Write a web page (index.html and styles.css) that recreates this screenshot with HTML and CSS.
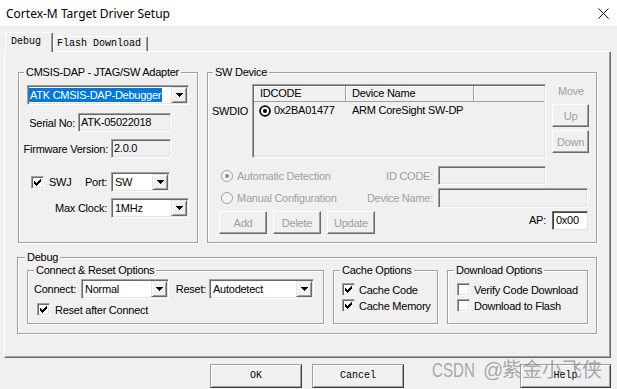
FILE: index.html
```html
<!DOCTYPE html>
<html lang="en">
<head>
    <meta charset="UTF-8">
    <title>Cortex-M Target Driver Setup</title>
    <link rel="stylesheet" href="styles.css">
</head>
<body>
<div class="window">

    <div class="titlebar">
        <span class="title">Cortex-M Target Driver Setup</span>
        <svg class="close" width="11" height="11" viewBox="0 0 11 11"><path d="M0.5 0.5L10.5 10.5M10.5 0.5L0.5 10.5" stroke="#111" stroke-width="1"/></svg>
    </div>

    <div class="client">
        <div class="tabs">
            <div class="tab active">Debug</div>
            <div class="tab">Flash Download</div>
        </div>

        <div class="tab-page">
            <div class="top-row">

                <!-- adapter -->
                <fieldset class="group adapter">
                    <legend>CMSIS-DAP - JTAG/SW Adapter</legend>
                    <div class="combo adapter-combo">
                        <span class="combo-text"><span class="selected">ATK CMSIS-DAP-Debugger</span></span>
                        <span class="combo-btn"><svg width="7" height="4" viewBox="0 0 7 4"><path d="M0 0h7v1H0zM1 1h5v1H1zM2 2h3v1H2zM3 3h1v1H3z"/></svg></span>
                    </div>
                    <div class="field-row serial-row">
                        <span>Serial No:</span>
                        <span class="edit readonly serial-edit">ATK-05022018</span>
                    </div>
                    <div class="field-row fw-row">
                        <span>Firmware Version:</span>
                        <span class="edit readonly fw-edit">2.0.0</span>
                    </div>
                    <div class="field-row swj-row">
                        <span class="check">
                            <span class="box"><svg width="7" height="7" viewBox="0 0 7 7"><path d="M0 2h1v3H0zM1 3h1v3H1zM2 4h1v3H2zM3 3h1v3H3zM4 2h1v3H4zM5 1h1v3H5zM6 0h1v3H6z"/></svg></span>
                            SWJ
                        </span>
                        <span class="port-label">Port:</span>
                        <div class="combo port-combo">
                            <span class="combo-text">SW</span>
                            <span class="combo-btn"><svg width="7" height="4" viewBox="0 0 7 4"><path d="M0 0h7v1H0zM1 1h5v1H1zM2 2h3v1H2zM3 3h1v1H3z"/></svg></span>
                        </div>
                    </div>
                    <div class="field-row clock-row">
                        <span>Max Clock:</span>
                        <div class="combo clock-combo">
                            <span class="combo-text">1MHz</span>
                            <span class="combo-btn"><svg width="7" height="4" viewBox="0 0 7 4"><path d="M0 0h7v1H0zM1 1h5v1H1zM2 2h3v1H2zM3 3h1v1H3z"/></svg></span>
                        </div>
                    </div>
                </fieldset>

                <!-- sw device -->
                <fieldset class="group sw-device">
                    <legend>SW Device</legend>
                    <div class="sw-top">
                        <span class="swdio">SWDIO</span>
                        <div class="listbox">
                            <div class="list-head">
                                <span class="col-id">IDCODE</span>
                                <span class="col-name">Device Name</span>
                                <span class="col-rest"></span>
                            </div>
                            <div class="list-row">
                                <span class="col-id">
                                    <svg width="12" height="12" viewBox="0 0 12 12"><circle cx="6" cy="6" r="4.9" fill="#fff" stroke="#000" stroke-width="1.8"/><circle cx="6" cy="6" r="2" fill="#000"/></svg>
                                    0x2BA01477
                                </span>
                                <span class="col-name">ARM CoreSight SW-DP</span>
                            </div>
                        </div>
                        <div class="move-col">
                            <span class="move-label">Move</span>
                            <span class="btn disabled up-btn">Up</span>
                            <span class="btn disabled down-btn">Down</span>
                        </div>
                    </div>

                    <div class="sw-row row-auto">
                        <span class="radio disabled">
                            <svg width="12" height="12" viewBox="0 0 12 12"><circle cx="6" cy="6" r="5.5" fill="#f4f4f4" stroke="#a0a0a0"/><circle cx="6" cy="6" r="2" fill="#8c8c8c"/></svg>
                            Automatic Detection
                        </span>
                        <span class="field-label disabled">ID CODE:</span>
                        <span class="edit readonly idcode-edit"></span>
                    </div>
                    <div class="sw-row row-manual">
                        <span class="radio disabled">
                            <svg width="12" height="12" viewBox="0 0 12 12"><circle cx="6" cy="6" r="5.5" fill="#f4f4f4" stroke="#a0a0a0"/></svg>
                            Manual Configuration
                        </span>
                        <span class="field-label disabled">Device Name:</span>
                        <span class="edit readonly devname-edit"></span>
                    </div>
                    <div class="sw-row row-actions">
                        <span class="btn disabled act-btn">Add</span>
                        <span class="btn disabled act-btn">Delete</span>
                        <span class="btn disabled act-btn">Update</span>
                        <span class="ap-label">AP:</span>
                        <span class="edit ap-edit">0x00</span>
                    </div>
                </fieldset>
            </div>

            <!-- debug -->
            <fieldset class="group debug">
                <legend>Debug</legend>
                <div class="debug-row">
                    <fieldset class="group connect">
                        <legend>Connect &amp; Reset Options</legend>
                        <div class="connect-row">
                            <span class="lbl-connect">Connect:</span>
                            <div class="combo connect-combo">
                                <span class="combo-text">Normal</span>
                                <span class="combo-btn"><svg width="7" height="4" viewBox="0 0 7 4"><path d="M0 0h7v1H0zM1 1h5v1H1zM2 2h3v1H2zM3 3h1v1H3z"/></svg></span>
                            </div>
                            <span class="lbl-reset">Reset:</span>
                            <div class="combo reset-combo">
                                <span class="combo-text">Autodetect</span>
                                <span class="combo-btn"><svg width="7" height="4" viewBox="0 0 7 4"><path d="M0 0h7v1H0zM1 1h5v1H1zM2 2h3v1H2zM3 3h1v1H3z"/></svg></span>
                            </div>
                        </div>
                        <div class="check reset-after">
                            <span class="box"><svg width="7" height="7" viewBox="0 0 7 7"><path d="M0 2h1v3H0zM1 3h1v3H1zM2 4h1v3H2zM3 3h1v3H3zM4 2h1v3H4zM5 1h1v3H5zM6 0h1v3H6z"/></svg></span>
                            Reset after Connect
                        </div>
                    </fieldset>

                    <fieldset class="group cache">
                        <legend>Cache Options</legend>
                        <div class="check opt-first">
                            <span class="box"><svg width="7" height="7" viewBox="0 0 7 7"><path d="M0 2h1v3H0zM1 3h1v3H1zM2 4h1v3H2zM3 3h1v3H3zM4 2h1v3H4zM5 1h1v3H5zM6 0h1v3H6z"/></svg></span>
                            Cache Code
                        </div>
                        <div class="check opt-next">
                            <span class="box"><svg width="7" height="7" viewBox="0 0 7 7"><path d="M0 2h1v3H0zM1 3h1v3H1zM2 4h1v3H2zM3 3h1v3H3zM4 2h1v3H4zM5 1h1v3H5zM6 0h1v3H6z"/></svg></span>
                            Cache Memory
                        </div>
                    </fieldset>

                    <fieldset class="group download">
                        <legend>Download Options</legend>
                        <div class="check opt-first">
                            <span class="box"></span>
                            Verify Code Download
                        </div>
                        <div class="check opt-next">
                            <span class="box"></span>
                            Download to Flash
                        </div>
                    </fieldset>
                </div>
            </fieldset>
        </div>

        <div class="buttons">
            <span class="btn push ok-btn">OK</span>
            <span class="btn push cancel-btn">Cancel</span>
            <span class="btn push help-btn">Help</span>
        </div>
    </div>

    <div class="watermark"><span class="wm-csdn">CSDN</span><span class="wm-at">@</span><span class="wm-name">紫金小飞侠</span></div>
</div>
</body>
</html>
```

FILE: styles.css
```css
* {
    box-sizing: border-box;
}

body {
    margin: 0;
    width: 617px;
    height: 389px;
    overflow: hidden;
    background: #f0f0f0;
    font-family: "Liberation Sans", Arial, sans-serif;
    font-size: 11px;
    letter-spacing: -0.25px;
    color: #000;
}

.window {
    position: relative;
    height: 389px;
}

/* title bar */
.titlebar {
    height: 26px;
    background: #fff;
    display: flex;
    align-items: center;
    justify-content: space-between;
    padding: 0 8px 0 6px;
    letter-spacing: 0;
}

.title {
    font-family: "Noto Sans", "Liberation Sans", sans-serif;
    font-size: 12px;
}

.close {
    display: block;
}

/* tabs */
.client {
    width: 611px;
    padding-left: 4px;
}

.tabs {
    display: flex;
    align-items: flex-end;
    height: 25px;
    padding-left: 1px;
}

.tab {
    font-family: "Liberation Mono", monospace;
    font-size: 10px;
    line-height: 12px;
    letter-spacing: 0;
    background: #f0f0f0;
    border: 1px solid;
    border-bottom: none;
    border-color: #fff #696969 #f0f0f0 #fff;
    box-shadow: inset -1px 0 #a0a0a0;
    border-radius: 2px 2px 0 0;
    width: 95px;
    height: 15px;
    padding: 1px 0 0 3px;
}

.tab.active {
    width: 48px;
    height: 20px;
    margin-bottom: -1px;
    padding: 3px 0 0 5px;
    position: relative;
    z-index: 1;
}

.tab-page {
    width: 607px;
    height: 307px;
    border: 1px solid;
    border-color: #fff #696969 #696969 #fff;
    box-shadow: inset -1px -1px #a0a0a0;
    padding: 13px 0 0 12px;
}

/* group boxes */
.group {
    margin: 0;
    padding: 0;
    min-width: 0;
    border: 1px solid #a0a0a0;
    box-shadow: inset 1px 1px #fff, 1px 1px #fff;
}

.group legend {
    margin-left: 6px;
    padding: 0 2px;
    line-height: 14px;
    background: #f0f0f0;
}

.top-row {
    display: flex;
    gap: 9px;
    margin-left: 1px;
    height: 178px;
}

.top-row > .group > legend {
    margin-left: 5px;
}

.adapter {
    width: 180px;
}

.sw-device {
    width: 390px;
}

/* controls */
.edit {
    display: block;
    height: 19px;
    border: 1px solid;
    border-color: #a0a0a0 #fff #fff #a0a0a0;
    box-shadow: inset 1px 1px #696969, inset -1px -1px #e3e3e3;
    background: #fff;
    padding: 0 2px;
    line-height: 17px;
}

.edit.readonly {
    background: #f0f0f0;
}

.combo {
    display: flex;
    height: 20px;
    padding: 1px;
    background: #fff;
    border: 1px solid;
    border-color: #a0a0a0 #fff #fff #a0a0a0;
    box-shadow: inset 1px 1px #696969, inset -1px -1px #e3e3e3;
}

.combo-text {
    flex: 1;
    padding-left: 2px;
    line-height: 16px;
    white-space: nowrap;
    overflow: hidden;
}

.combo-btn {
    width: 16px;
    display: flex;
    align-items: center;
    justify-content: center;
    background: #f0f0f0;
    border: 1px solid;
    border-color: #e3e3e3 #696969 #696969 #e3e3e3;
    box-shadow: inset 1px 1px #fff, inset -1px -1px #a0a0a0;
}

.combo-btn svg {
    display: block;
}

.selected {
    display: inline-block;
    background: #0078d7;
    color: #fff;
    line-height: 14px;
    margin: 1px 0 0 -2px;
    padding: 0 1px;
}

.check {
    display: flex;
    align-items: center;
    gap: 5px;
    height: 15px;
}

.box {
    width: 13px;
    height: 13px;
    flex: none;
    display: flex;
    align-items: center;
    justify-content: center;
    background: #fff;
    border: 1px solid;
    border-color: #a0a0a0 #fff #fff #a0a0a0;
    box-shadow: inset 1px 1px #696969, inset -1px -1px #e3e3e3;
}

.box svg {
    display: block;
}

.btn {
    display: flex;
    align-items: center;
    justify-content: center;
    background: #f0f0f0;
    border: 1px solid;
    border-color: #fff #696969 #696969 #fff;
    box-shadow: inset -1px -1px #a0a0a0;
}

.disabled {
    color: #a0a0a0;
}

/* adapter group */
.adapter-combo {
    width: 162px;
    margin: 6px 0 0 8px;
}

.field-row {
    display: flex;
    align-items: center;
    justify-content: flex-end;
    gap: 3px;
}

.serial-row {
    margin-top: 8px;
    padding-right: 26px;
}

.serial-edit {
    width: 93px;
}

.fw-row {
    margin-top: 7px;
    padding-right: 26px;
}

.fw-edit {
    width: 60px;
}

.swj-row {
    margin-top: 14px;
    padding: 0 27px 0 12px;
    justify-content: flex-start;
}

.port-label {
    margin-left: auto;
    margin-right: 1px;
}

.port-combo {
    width: 59px;
}

.clock-row {
    margin-top: 6px;
    padding-right: 8px;
    gap: 4px;
}

.clock-combo {
    width: 78px;
}

/* sw device group */
.sw-top {
    display: flex;
    margin-top: 5px;
}

.swdio {
    width: 44px;
    padding: 20px 0 0 4px;
    line-height: 14px;
}

.listbox {
    width: 294px;
    height: 74px;
    background: #f0f0f0;
    border: 1px solid;
    border-color: #a0a0a0 #fff #fff #a0a0a0;
    box-shadow: inset 1px 1px #696969, inset -1px -1px #e3e3e3;
    padding: 1px;
}

.list-head {
    display: flex;
    height: 16px;
}

.list-head span {
    line-height: 15px;
    border-right: 1px solid #a0a0a0;
    border-bottom: 1px solid #a0a0a0;
    box-shadow: inset 1px 1px #fff;
}

.list-row {
    display: flex;
    line-height: 17px;
}

.col-id {
    width: 92px;
    padding-left: 5px;
    display: flex;
    align-items: center;
    gap: 3px;
}

.list-head .col-id {
    padding-left: 6px;
}

.col-name {
    width: 128px;
    padding-left: 6px;
}

.col-rest {
    flex: 1;
}

.list-head .col-rest {
    border-right: none;
}

.move-col {
    width: 37px;
    margin-left: 6px;
    display: flex;
    flex-direction: column;
    color: #a0a0a0;
}

.move-label {
    line-height: 14px;
    text-align: center;
    padding-left: 1px;
}

.up-btn,
.down-btn {
    height: 23px;
}

.up-btn {
    margin-top: 6px;
}

.down-btn {
    margin-top: 3px;
}

.sw-row {
    display: flex;
    align-items: center;
    padding-right: 8px;
}

.radio {
    flex: 1;
    display: flex;
    align-items: center;
    gap: 4px;
    padding-left: 13px;
}

.radio svg {
    display: block;
}

.field-label {
    margin-right: 5px;
}

.row-auto {
    margin-top: 8px;
    height: 19px;
}

.idcode-edit {
    width: 108px;
    margin-right: 42px;
}

.row-manual {
    margin-top: 3px;
    height: 20px;
}

.devname-edit {
    width: 150px;
    height: 20px;
}

.row-actions {
    margin-top: 3px;
    height: 23px;
    align-items: flex-start;
    padding-left: 11px;
    gap: 6px;
}

.act-btn {
    width: 48px;
    height: 23px;
}

.ap-label {
    margin-left: auto;
    line-height: 19px;
}

.ap-edit {
    width: 36px;
    border-color: #696969 #e3e3e3 #e3e3e3 #696969;
    box-shadow: inset 1px 1px #404040;
    padding-left: 3px;
}

/* debug group */
.debug {
    width: 580px;
    height: 84px;
    margin-top: 7px;
}

.debug > legend {
    margin-left: 7px;
}

.debug-row {
    display: flex;
    gap: 9px;
    margin: -1px 0 0 9px;
}

.debug-row .group {
    height: 61px;
}

.connect {
    width: 297px;
}

.cache {
    width: 105px;
}

.download {
    width: 141px;
}

.connect-row {
    display: flex;
    align-items: center;
    margin-top: 2px;
    padding-left: 6px;
}

.lbl-connect {
    width: 47px;
}

.connect-combo {
    width: 88px;
}

.lbl-reset {
    width: 40px;
    text-align: right;
    padding-right: 3px;
}

.reset-combo {
    width: 105px;
}

.reset-after {
    margin: 3px 0 0 9px;
}

.cache .check {
    padding-left: 8px;
    gap: 4px;
}

.download .check {
    padding-left: 9px;
    gap: 4px;
}

.opt-first {
    margin-top: 5px;
}

.opt-next {
    margin-top: 1px;
}

/* dialog buttons */
.buttons {
    display: flex;
    gap: 10px;
    margin-top: 6px;
    width: 607px;
}

.btn.push {
    width: 92px;
    height: 24px;
    font-family: "Liberation Mono", monospace;
    font-size: 10px;
    letter-spacing: 0;
    border-color: #a0a0a0 #404040 #404040 #a0a0a0;
    box-shadow: inset 1px 1px #fff, inset -1px -1px #a0a0a0;
    padding-bottom: 1px;
}

.ok-btn {
    margin-left: 206px;
}

.btn.help-btn {
    width: 91px;
    margin-left: auto;
}

/* watermark overlays the help button */
.watermark {
    position: absolute;
    left: 432px;
    top: 357px;
    display: flex;
    align-items: baseline;
    font-size: 20px;
    line-height: 24px;
    letter-spacing: 0;
    color: rgba(120, 120, 120, 0.62);
    white-space: nowrap;
}

.wm-csdn {
    display: inline-block;
    width: 51px;
    font-size: 21px;
    transform: scaleX(0.72);
    transform-origin: 0 0;
}

.wm-at {
    width: 19px;
}

.wm-name {
    font-family: "Noto Sans CJK SC", sans-serif;
}
```
